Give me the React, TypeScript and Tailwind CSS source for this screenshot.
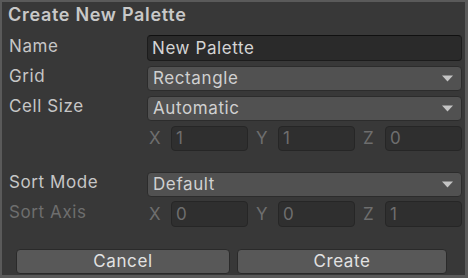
import React from "react";

const font = { fontFamily: "Inter, 'Noto Sans', sans-serif" };

function Arrow() {
  return (
    <svg width="11" height="7" viewBox="0 0 11 7" className="shrink-0">
      <path d="M0 0.5 L11 0.5 L5.5 6.5 Z" fill="#c4c4c4" />
    </svg>
  );
}

function Label({ text, disabled }: { text: string; disabled?: boolean }) {
  return (
    <div
      className={`w-[145px] shrink-0 flex items-center pb-[4px] pl-[7px] ${
        disabled ? "text-[#6e6e6e]" : "text-[#c6c6c6]"
      }`}
    >
      {text}
    </div>
  );
}

function Dropdown({ value }: { value: string }) {
  return (
    <div className="flex-1 flex items-center justify-between rounded-[4px] border border-[#2c2c2c] bg-[#515151] pl-[5px] pr-[8px] text-[#d0d0d0]">
      <span>{value}</span>
      <Arrow />
    </div>
  );
}

function Vec({ vals }: { vals: string[] }) {
  const names = ["X", "Y", "Z"];
  return (
    <div className="flex-1 grid grid-cols-3 gap-[6px]">
      {names.map((n, i) => (
        <div key={n} className="flex">
          <div className="w-[24px] shrink-0 pl-[2px] flex items-center text-[#6e6e6e]">
            {n}
          </div>
          <div className="flex-1 flex items-center rounded-[4px] border border-[#262626] bg-[#2f2f2f] pl-[4px] text-[#6e6e6e]">
            {vals[i]}
          </div>
        </div>
      ))}
    </div>
  );
}

export default function App() {
  return (
    <div
      className="w-[468px] h-[278px] bg-[#5a5a5a] pt-[2px] pl-[2px] pr-[3px] pb-[3px] text-[17px] leading-none tracking-[0.6px]"
      style={font}
    >
      <div className="h-full bg-[#383838] flex flex-col pr-[3px]">
        <div className="h-[33px] shrink-0 pl-[6px] pt-[4px] font-semibold text-[#c8c8c8] text-[18px] tracking-[0.7px]">
          Create New Palette
        </div>
        <div className="h-[26px] flex shrink-0">
          <Label text="Name" />
          <div className="flex-1 flex items-center rounded-[4px] border border-[#1c1c1c] border-t-[#101010] bg-[#2a2a2a] pl-[4px] text-[#d4d4d4]">
            New Palette
          </div>
        </div>
        <div className="h-[25px] mt-[5px] flex shrink-0">
          <Label text="Grid" />
          <Dropdown value="Rectangle" />
        </div>
        <div className="h-[25px] mt-[5px] flex shrink-0">
          <Label text="Cell Size" />
          <Dropdown value="Automatic" />
        </div>
        <div className="h-[25px] mt-[5px] flex shrink-0">
          <div className="w-[145px] shrink-0" />
          <Vec vals={["1", "1", "0"]} />
        </div>
        <div className="h-[25px] mt-[21px] flex shrink-0">
          <Label text="Sort Mode" />
          <Dropdown value="Default" />
        </div>
        <div className="h-[26px] mt-[4px] flex shrink-0">
          <Label text="Sort Axis" disabled />
          <Vec vals={["0", "0", "1"]} />
        </div>
        <div className="h-[25px] mt-[22px] flex shrink-0 pl-[14px] gap-[7px]">
          <div className="w-[214px] flex items-center justify-center rounded-[4px] border border-[#2a2a2a] bg-[#585858] text-[#e2e2e2]">
            Cancel
          </div>
          <div className="w-[210px] flex items-center justify-center rounded-[4px] border border-[#2a2a2a] bg-[#585858] text-[#e2e2e2]">
            Create
          </div>
        </div>
      </div>
    </div>
  );
}
